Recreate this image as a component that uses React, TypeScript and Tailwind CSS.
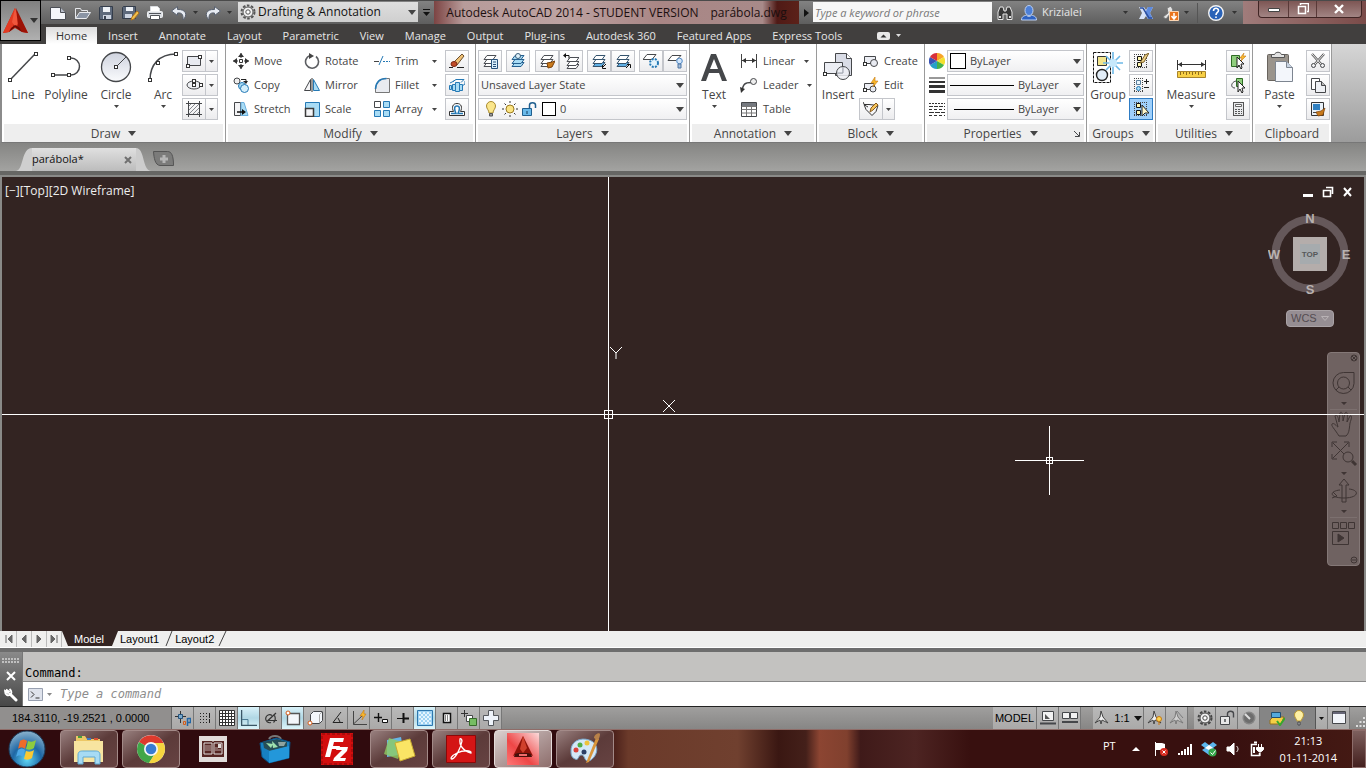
import type { ReactNode } from "react";
import clsx from "clsx";

const DARK = "#45474a";
const BLUE = "#2579b5";
const SKY = "#a9dcf5";

type SvgProps = { w?: number; h?: number; stroke?: string; className?: string; children: ReactNode };

function Svg({ w = 16, h = 16, stroke = DARK, className, children }: SvgProps) {
  return (
    <svg width={w} height={h} viewBox={`0 0 ${w} ${h}`} fill="none" stroke={stroke} className={clsx("shrink-0", className)} aria-hidden="true">
      {children}
    </svg>
  );
}

function Caret({ color = "#444", small = false }: { color?: string; small?: boolean }) {
  return small ? (
    <Svg w={5} h={3} stroke="none"><path d="M0 0h5L2.500 3z" fill={color} /></Svg>
  ) : (
    <Svg w={8} h={5} stroke="none"><path d="M0 0h8L4 5z" fill={color} /></Svg>
  );
}

const node = (x: number, y: number, c = "#333") => <rect x={x - 1.5} y={y - 1.5} width="3" height="3" fill="#fff" stroke={c} />;

/* ---------- quick access ---------- */
const quick = [
  { label: "New", icon: <Svg w={18}><path d="M1.500 2.500h10l5 5v7h-15z" fill="#f4f6fa" stroke="#4b4e55" /><path d="M11.500 2.500v5h5" fill="#b8bdc8" stroke="#4b4e55" /></Svg> },
  { label: "Open", icon: <Svg w={18}><path d="M1.500 13.500v-10h5l1 2h6v2" stroke="#e6e8ec" /><path d="M1.500 13.500l4-6h11l-4 6z" fill="#8b95a5" stroke="#e9ebef" /></Svg> },
  { label: "Save", icon: <Svg><path d="M1.500 1.500h12v13h-13v-12z" fill="#5e6a7c" stroke="#343d4b" /><path d="M4 2h7v5H4z" fill="#edf1f6" stroke="none" /><path d="M4 10h8v4H4z" fill="#cdd5e2" stroke="none" /><path d="M5 11h2v3H5z" fill="#3c4453" stroke="none" /></Svg> },
  { label: "Save As", icon: <Svg w={17}><path d="M1.500 1.500h12v12h-13v-11z" fill="#5e6a7c" stroke="#343d4b" /><path d="M4 2h7v4H4z" fill="#edf1f6" stroke="none" /><path d="M3 9h7v4H3z" fill="#cdd5e2" stroke="none" /><path d="M9 15l1-3 5-6 2 2-5 6z" fill="#f2c04b" stroke="#b1741c" /></Svg> },
  { label: "Plot", icon: <Svg w={18}><path d="M4.500 6V1.500h7l2 2V6" fill="#fff" stroke="#d9dce0" /><rect x="1.500" y="6.500" width="15" height="6" rx="1" fill="#dcdfe4" stroke="#eef0f2" /><path d="M4.500 10.500h9v4h-9z" fill="#fff" stroke="#4f5359" /><path d="M3 8.500h12" stroke="#50555c" /></Svg> },
  { label: "Undo", icon: <Svg><path d="M6.500 1.500L.500 6l6 4.500V8c4-.5 6 1 5.500 7 5-5 3-11-5.500-10.500z" fill="#e7ebf2" stroke="#5a6270" /></Svg>, caret: true },
  { label: "Redo", icon: <Svg><path d="M9.500 1.500l6 4.500-6 4.500V8c-4-.5-6 1-5.500 7-5-5-3-11 5.500-10.500z" fill="#e7ebf2" stroke="#5a6270" /></Svg>, caret: true },
];

function Gear({ fill = "#f2f2f2", stroke = "#555" }: { fill?: string; stroke?: string }) {
  return (
    <Svg stroke={stroke}>
      <circle cx="8" cy="8" r="6.500" strokeDasharray="2.600 1.500" strokeWidth="2" />
      <circle cx="8" cy="8" r="5" fill={fill} />
      <circle cx="8" cy="8" r="2.200" fill="#fff" />
    </Svg>
  );
}

/* ---------- ribbon icons ---------- */
const big = {
  line: <Svg w={32} h={32}><path d="M3 29L28 3" strokeWidth="1.500" />{node(3, 29)}{node(29, 3)}</Svg>,
  polyline: <Svg w={32} h={32}><path d="M3 24h18a8.500 8.500 0 0 0 0-17h-2" strokeWidth="1.500" />{node(3, 24)}{node(19, 24)}{node(19, 7)}</Svg>,
  circle: (
    <Svg w={32} h={32}>
      <defs><linearGradient id="disc" x1="0" y1="0" x2="0" y2="1"><stop offset="0" stopColor="#cfd3de" /><stop offset="1" stopColor="#fafbfd" /></linearGradient></defs>
      <circle cx="16" cy="16" r="14.500" fill="url(#disc)" strokeWidth="1.300" /><path d="M16 16L26 6" />{node(16, 16)}
    </Svg>
  ),
  arc: <Svg w={32} h={32}><path d="M3 29C3 14 12 3 29 3" strokeWidth="1.500" />{node(3, 29)}{node(11, 12)}{node(29, 3)}</Svg>,
  text: <Svg w={28} h={32} stroke="none"><path d="M1 30L11 3h5l11 27h-5l-3-8H9l-3 8zM10 18h8L14 8z" fill="#45474a" fillRule="evenodd" /></Svg>,
  insert: (
    <Svg w={32} h={32}>
      <path d="M13.500 2.500h11l5 5v17h-16z" fill="#d9dce6" /><path d="M24.500 2.500v5h5" fill="#fff" />
      <path d="M2.500 11.500h18v11h-18z" fill="#eceef4" />{node(3, 23)}
      <circle cx="21" cy="22" r="6.500" fill="#eef0f5" fillOpacity=".85" /><path d="M21 22v-6M21 22h-6" stroke="#9aa0ac" />
    </Svg>
  ),
  group: (
    <Svg w={32} h={32}>
      <path d="M1.500 1.500h17v30h-17z" stroke="#111" strokeDasharray="3 1" /><path d="M5.500 5.500h9v9h-9z" fill="#f2e58d" stroke="#333" />
      <circle cx="10" cy="24" r="5.500" fill="#e3eef8" stroke="#222" strokeWidth="1.400" />
      <path d="M21 1v22M11 12h20M14 5l14 14M28 5L14 19" stroke="#6db9e8" strokeWidth="1.600" /><circle cx="21" cy="12" r="4" fill="#c6e8fb" stroke="none" />
    </Svg>
  ),
  measure: (
    <Svg w={32} h={32}>
      <path d="M2.500 9v10M30.500 9v10M3 13.500h27" stroke="#333" /><path d="M7 11l-4 2.500L7 16zM26 11l4 2.500-4 2.500z" fill="#333" stroke="none" />
      <path d="M2.500 20.500h28v6h-28z" fill="#f7cf45" stroke="#a8842a" /><path d="M5.500 21v3M8.500 21v2M11.500 21v3M14.500 21v2M17.500 21v3M20.500 21v2M23.500 21v3M26.500 21v2" stroke="#8d6a1a" />
    </Svg>
  ),
  paste: (
    <Svg w={32} h={32}>
      <rect x="3.500" y="3.500" width="21" height="26" rx="1" fill="#9a948c" stroke="#69645e" /><path d="M7.500 6.500V3.500h3c1-3 6-3 7 0h3v3z" fill="#e2e2e2" stroke="#555" />
      <path d="M11.500 10.500h11l6 6v14h-17z" fill="#f3f6fb" stroke="#7d8590" /><path d="M22.500 10.500v6h6" fill="#c9d4e2" stroke="#7d8590" />
    </Svg>
  ),
};

const sm = {
  rect: <Svg w={18}><path d="M2.500 3.500h13v9h-13z" fill="#e8eaf0" />{node(3, 13)}{node(15, 4)}</Svg>,
  ellipse: <Svg w={18}><ellipse cx="9" cy="8" rx="7" ry="4" fill="#eef0f4" />{node(9, 4)}{node(9, 8)}{node(16, 8)}</Svg>,
  hatch: <Svg w={18}><path d="M3.500 0v16M14.500 0v16M1 2.500h16M1 13.500h16" /><path d="M4 5l2-2M4 9l6-6M4 13L14 3M8 13l6-6M12 13l2-2" stroke="#85888e" /></Svg>,
  move: <Svg><path d="M8 0v5M8 11v5M0 8h5M11 8h5" stroke="#333" /><path d="M8 0l3 4H5zM8 16l3-4H5zM0 8l4-3v6zM16 8l-4-3v6z" fill="#333" stroke="none" /><path d="M6.500 6.500h3v3h-3z" fill="#fff" stroke="#333" /></Svg>,
  copy: <Svg><circle cx="4" cy="4" r="3" fill="#eee" /><path d="M8 2.500h5v2" stroke="#222" /><path d="M10 4h5l-2 3z" fill="#222" stroke="none" /><circle cx="9" cy="9" r="3.500" fill={SKY} stroke={BLUE} /><circle cx="11.500" cy="11.500" r="4" fill="#d5effc" stroke={BLUE} /></Svg>,
  stretch: <Svg><path d="M1.500 1.500h6v13h-6z" fill="#f4f4f6" /><path d="M8 1.500h3l4 13H8z" fill={SKY} stroke="#69aede" /><path d="M4 11h7" stroke="#111" strokeWidth="1.500" /><path d="M9 8l4 3-4 3z" fill="#111" stroke="none" /></Svg>,
  rotate: <Svg><path d="M6 2.500a6.500 6.500 0 1 0 6 1" strokeWidth="1.600" stroke="#5c5e62" /><path d="M5 0l5 3-5 3z" fill="#444" stroke="none" /></Svg>,
  mirror: <Svg><path d="M6.500 2.500v11h-6z" fill="#f5f5f7" /><path d="M9.500 2.500v11h6z" fill={SKY} stroke={BLUE} /><path d="M8 1v14" stroke="#333" /></Svg>,
  scale: <Svg><path d="M1.500 1.500h14v14h-14z" fill={SKY} stroke={BLUE} /><path d="M1.500 7.500h8v8h-8z" fill="#f5f5f7" stroke="#3b3b3b" strokeWidth="1.500" /></Svg>,
  trim: <Svg><path d="M0 8.500h5" stroke="#444" /><path d="M5 12l4-9" stroke={BLUE} /><path d="M9 8.500h7" stroke={BLUE} strokeDasharray="2 1" /></Svg>,
  fillet: <Svg><path d="M1.500 15.500V12C2 5 6 1.500 12.500 1.500h3v14z" fill="#e9ebf0" stroke="#777" /><path d="M1.500 12C2 5 6 1.500 12.500 1.500" stroke={BLUE} strokeWidth="1.600" /></Svg>,
  array: <Svg><path d="M.500.500h6v6h-6z" fill="#fff" /><path d="M9.500.500h6v6h-6zM.500 9.500h6v6h-6zM9.500 9.500h6v6h-6z" fill={SKY} stroke={BLUE} /></Svg>,
  erase: <Svg><path d="M5 9l8-8 2 2-7 9z" fill="#efc176" stroke="#6d5130" /><ellipse cx="5" cy="11" rx="3" ry="2.500" fill="#c14b28" stroke="#7a2a14" /><path d="M0 14.500h4M8 14.500h7" stroke="#222" /></Svg>,
  explode: <Svg><path d="M4 4.500l3-2h8l-3 3M1 6l4-2M13 9l3-2V4" stroke={BLUE} /><path d="M3.500 7.500h3v-2h4v2h3v6h-3v1h-4v-1h-3z" fill={SKY} stroke={BLUE} /><path d="M6.500 7.500v6M10.500 7.500v6M.500 8.500h2v4h-2z" stroke={BLUE} fill={SKY} /></Svg>,
  offset: <Svg><path d="M.500 14.500h15v-4h-4c2-4 1-8-3.500-8s-5.500 4-3.500 8h-4z" stroke="#333" fill="#fff" /><path d="M2 12.500h5C5 8 5 5 8 5s3 3 1 7.500h5" stroke={BLUE} strokeWidth="1.500" /></Svg>,
  linear: <Svg w={18}><path d="M1.500 1v14M16.500 1v14M2 7.500h14" stroke="#444" /><path d="M6 5L2 7.500 6 10zM12 5l4 2.500-4 2.500z" fill="#333" stroke="none" /></Svg>,
  leader: <Svg w={18}><path d="M2 14C3 7 5 5.500 11 5.500" strokeWidth="1.400" /><path d="M0 10l1 6 4-4z" fill="#333" stroke="none" /><circle cx="13.500" cy="4.500" r="3" fill="#eee" /></Svg>,
  table: <Svg w={18}><path d="M1.500 1.500h15v14h-15z" fill="#fff" /><path d="M2 2h14v3H2z" fill="#75797f" stroke="none" /><path d="M1.500 5.500h15M1.500 8.500h15M1.500 12h15M6.500 5v10M11.500 5v10" stroke="#777" /></Svg>,
  create: <Svg><path d="M1.500 3.500h11v7h-11z" fill="#eceef4" />{node(2, 11)}<circle cx="11" cy="10" r="3.500" fill="#e9ebf2" /></Svg>,
  edit: <Svg><path d="M1.500 6.500h10v6h-10z" fill="#eceef4" />{node(2, 13)}<circle cx="10" cy="12" r="3" fill="#e9ebf2" /><path d="M12 0L8 6h3l-1 4 5-6h-3z" fill="#f8b72d" stroke="#c67b13" strokeWidth=".6" /></Svg>,
  attrs: <Svg><path d="M1 3.500h5l9 1-2 6-4 4-6-6z" fill="#f6f6f8" stroke="#333" /><path d="M0 1c1 3 3 4 5 5" stroke="#333" /><path d="M7 11l1-4 5-5 2 2-5 5z" fill="#f6c55c" stroke="#8a5b1a" /></Svg>,
};

const sheets = (c = "#4b4e54", f = "#fff", last = f) => (
  <g stroke={c}><path d="M5 9.500h9l-3 4H2z" fill={last} /><path d="M5 6.500h9l-3 4H2z" fill={f} /><path d="M5 2.500h9l-3 4H2z" fill={f} /></g>
);

const layerTools = [
  [{ label: "Layer Properties", icon: <Svg>{sheets()}<path d="M9.500 6.500h6v9h-6z" fill="#d9eefb" stroke="#27507a" /><path d="M11 9h3M11 11.500h3M11 13.500h3" stroke="#27507a" /></Svg> }],
  [{ label: "Make Current", icon: <Svg>{sheets("#255f8f", SKY)}<circle cx="8" cy="3" r="2.500" fill="#dff2fc" stroke="#375b78" /></Svg> }],
  [
    { label: "Match Layer", icon: <Svg>{sheets()}<path d="M8 10l5-1 3-1-3 6-4 1z" fill="#c97a1b" stroke="#7c420b" /></Svg> },
    { label: "Previous Layer", icon: <Svg><g transform="translate(2 2)">{sheets()}</g><path d="M1 2.500h5v3" stroke="#111" /><path d="M0 2.500L3 0v5z" fill="#111" stroke="none" /></Svg> },
  ],
  [
    { label: "Isolate", icon: <Svg>{sheets("#35536d", "#fff", "#5fb0e6")}<path d="M15 11l-4 4M11.500 12v3.500H15" stroke="#111" /></Svg> },
    { label: "Unisolate", icon: <Svg>{sheets("#35536d", "#fff", "#5fb0e6")}<path d="M11 15l4-4M12 11.500h3.500V15" stroke="#111" /></Svg> },
  ],
  [
    { label: "Freeze", icon: <Svg><path d="M4 1.500h9l-4 5H0z" fill="#fff" /><circle cx="11" cy="10" r="4" fill="#e4f4fd" stroke={BLUE} strokeDasharray="2 1.200" strokeWidth="2" /></Svg> },
    { label: "Off", icon: <Svg><path d="M5 2.500h9l-5 5H1z" fill="#fff" /><circle cx="12.500" cy="8" r="2.800" fill="#d1e5fa" stroke="#4f88c6" /><path d="M11 11h3v4h-3z" fill="#a8bfd8" stroke="#4f77a6" /></Svg> },
  ],
];

const dotGrid = <path d="M1.500 1v14M13.500 1v14M1 1.500h13M1 14.500h13" stroke="#444" strokeDasharray="1 1" />;

const groupTools = [
  { label: "Ungroup", icon: <Svg>{dotGrid}<path d="M4.500 3.500h4v4h-4zM4.500 9.500h4v4h-4z" fill="#fff7b0" stroke="#111" /><path d="M7 10l5-8 4-2-5 9z" fill="#ecd08b" stroke="#7c6025" /></Svg> },
  { label: "Group Edit", icon: <Svg><path d="M1.500 1v14M9.500 1v14M1 1.500h9M1 14.500h9" stroke="#444" strokeDasharray="1 1" /><path d="M3.500 3.500h4v4h-4z" fill="#eaf6fd" stroke="#5a7f9c" /><circle cx="5.500" cy="11.500" r="2" fill={SKY} stroke={BLUE} /><path d="M11 4.500h5M13.500 2v5M11 10.500h5" stroke="#222" /></Svg> },
  { label: "Group Selection", icon: <Svg>{dotGrid}<path d="M3.500 2.500h4v4h-4zM3.500 9.500h4v4h-4z" fill="#fff7b0" stroke="#111" /><path d="M9 4v11l3-3h4z" fill="#fff7c8" stroke="#222" /></Svg>, active: true },
];

const utilityTools = [
  { label: "Quick Select", icon: <Svg><path d="M1.500 2.500h8v11h-8z" fill="#8fce7d" stroke="#2e6b25" /><path d="M14 0l-4 5h2l-1 3 5-5h-3z" fill="#f8b72d" stroke="#c67b13" strokeWidth=".6" /><path d="M7 4v11l2-3 2 4 1-1-1-4h3z" fill="#fff" stroke="#222" /></Svg> },
  { label: "Select All", icon: <Svg><path d="M6.500 1.500h6v8h-6z" fill="#8fce7d" stroke="#2e6b25" /><path d="M6 4C1 5 0 11 5 11" /><path d="M8 4v11l2-3 2 4 1-1-1-4h3z" fill="#fff" stroke="#222" /></Svg> },
  { label: "Quick Calculator", icon: <Svg><rect x="3.500" y="1.500" width="10" height="13" fill="#e9eaec" stroke="#555" /><path d="M5.500 3.500h6v2h-6z" fill="#fff" stroke="#666" /><path d="M5 8.500h7M5 10.500h7M5 12.500h7" stroke="#555" strokeDasharray="2 1" /></Svg> },
];

const clipTools = [
  { label: "Cut", icon: <Svg><path d="M2 1l9 10M14 1L5 11" stroke="#555" strokeWidth="2.400" /><path d="M2 1l9 10M14 1L5 11" stroke="#eee" /><circle cx="3.500" cy="12.500" r="2" /><circle cx="12.500" cy="12.500" r="2" /></Svg> },
  { label: "Copy Clip", icon: <Svg><path d="M1.500 1.500h8v11h-8z" fill="#fff" /><path d="M5.500 4.500h6l4 4v7h-10z" fill="#eef0f4" /><path d="M11.500 4.500v4h4" fill="#bbb" /></Svg> },
  { label: "Match Properties", icon: <Svg><path d="M1.500 1.500h12v13h-12z" fill="#e9f1f8" stroke="#333" /><path d="M3 3h7v6H3z" fill="#2f7fc0" stroke="none" /><path d="M3 11.500h5" /><path d="M6 11l5-1 4-3-2 7-5 1z" fill="#c97a1b" stroke="#7c420b" strokeWidth=".7" /></Svg> },
];

const tabs = ["Home", "Insert", "Annotate", "Layout", "Parametric", "View", "Manage", "Output", "Plug-ins", "Autodesk 360", "Featured Apps", "Express Tools"];

/* ---------- ribbon parts ---------- */
const boxed = "flex items-center justify-center border border-[#c4c6cb] bg-linear-to-b from-white to-[#ececee]";

function Panel({ title, width, caret = true, launcher = false, children }: { title: string; width: string; caret?: boolean; launcher?: boolean; children: ReactNode }) {
  return (
    <section className={clsx("flex shrink-0 flex-col border-r border-[#9a9a9a] bg-white", width)}>
      <div className="flex h-20 items-start pt-1.5">{children}</div>
      <h2 className="mx-0.5 flex h-[18px] items-center bg-[#eeeeee] pt-px text-[12px]">
        <button className="flex flex-1 items-center justify-center gap-2 leading-4">{title}{caret && <Caret />}</button>
        {launcher && <button aria-label={`${title} settings`} className="pr-1"><Svg w={6} h={6}><path d="M0 0l5 5M5.500 1v4.500H1" /></Svg></button>}
      </h2>
    </section>
  );
}

function BigButton({ label, icon, width, caret = false }: { label: string; icon: ReactNode; width: string; caret?: boolean }) {
  return (
    <button className={clsx("flex shrink-0 flex-col items-center pt-px text-[12px]", width)}>
      {icon}
      <span className="mt-1 leading-4">{label}</span>
      {caret && <span className="mt-0.5"><Caret small /></span>}
    </button>
  );
}

function ToolButton({ label, icon, caret = false }: { label: string; icon: ReactNode; caret?: boolean }) {
  return (
    <button className="flex h-[22px] items-center gap-[5px] whitespace-nowrap">
      {icon}<span>{label}</span>{caret && <span className="ml-1"><Caret small /></span>}
    </button>
  );
}

/* same as ToolButton, with the arrow held at the column's edge */
function MenuTool({ label, icon }: { label: string; icon: ReactNode }) {
  return (
    <button className="flex h-[22px] items-center gap-[5px] whitespace-nowrap pr-2">
      {icon}<span className="flex-1 text-left">{label}</span><Caret small />
    </button>
  );
}

function IconButton({ label, icon, active = false }: { label: string; icon: ReactNode; active?: boolean }) {
  return (
    <button aria-label={label} className={clsx("h-[22px] w-6 shrink-0", active ? "flex items-center justify-center border border-[#2e7cc4] bg-[#9fd0fb]" : boxed)}>
      {icon}
    </button>
  );
}

function SplitButton({ label, icon }: { label: string; icon: ReactNode }) {
  return (
    <div className="flex">
      <button aria-label={label} className={clsx("h-[22px] w-6", boxed)}>{icon}</button>
      <button aria-label={`${label} options`} className={clsx("h-[22px] w-3 border-l-0", boxed)}><Caret small /></button>
    </div>
  );
}

function Combo({ label, value, before }: { label: string; value: string; before?: ReactNode }) {
  return (
    <label className="flex h-[22px] min-w-0 flex-1 items-center gap-1 border border-[#c4c6cb] bg-linear-to-b from-white to-[#f0f0f2] px-0.5">
      {before}
      <select aria-label={label} className="min-w-0 flex-1 appearance-none bg-transparent leading-4 outline-none">
        <option>{value}</option>
      </select>
      <Caret />
    </label>
  );
}

const Rows = ({ width, children }: { width: string; children: ReactNode }) => <div className={clsx("flex shrink-0 flex-col gap-0.5", width)}>{children}</div>;

function Ribbon() {
  return (
    <div className="flex h-[99px] border-l-2 border-[#8b8b8b] border-b border-b-[#777] bg-linear-to-b from-[#d6d6d6] to-[#9c9c9c] text-[11px] text-[#454545]">
      <Panel title="Draw" width="w-56">
        <BigButton label="Line" icon={big.line} width="w-[42px]" />
        <BigButton label="Polyline" icon={big.polyline} width="w-11" />
        <BigButton label="Circle" icon={big.circle} width="w-14" caret />
        <BigButton label="Arc" icon={big.arc} width="w-[38px]" caret />
        <Rows width="w-9">
          <SplitButton label="Rectangle" icon={sm.rect} />
          <SplitButton label="Ellipse" icon={sm.ellipse} />
          <SplitButton label="Hatch" icon={sm.hatch} />
        </Rows>
      </Panel>
      <Panel title="Modify" width="w-[250px]">
        <div className="flex pl-[7px]">
          <Rows width="w-[71px]">
            <ToolButton label="Move" icon={sm.move} />
            <ToolButton label="Copy" icon={sm.copy} />
            <ToolButton label="Stretch" icon={sm.stretch} />
          </Rows>
          <Rows width="w-[70px]">
            <ToolButton label="Rotate" icon={sm.rotate} />
            <ToolButton label="Mirror" icon={sm.mirror} />
            <ToolButton label="Scale" icon={sm.scale} />
          </Rows>
          <Rows width="w-[71px]">
            <MenuTool label="Trim" icon={sm.trim} />
            <MenuTool label="Fillet" icon={sm.fillet} />
            <MenuTool label="Array" icon={sm.array} />
          </Rows>
          <Rows width="w-6">
            <IconButton label="Erase" icon={sm.erase} />
            <IconButton label="Explode" icon={sm.explode} />
            <IconButton label="Offset" icon={sm.offset} />
          </Rows>
        </div>
      </Panel>
      <Panel title="Layers" width="w-[214px]">
        <div className="flex flex-1 flex-col gap-0.5 px-0.5">
          <div className="flex justify-between">
            {layerTools.map((set) => (
              <div key={set[0].label} className="flex">
                {set.map((tool) => <IconButton key={tool.label} {...tool} />)}
              </div>
            ))}
          </div>
          <div className="flex"><Combo label="Layer state" value="Unsaved Layer State" /></div>
          <div className="flex">
            <Combo
              label="Layer"
              value="0"
              before={
                <span className="flex items-center gap-[3px] pl-0.5">
                  <Svg><path d="M6 12C6 9 3.500 8 3.500 5a4.500 4.500 0 0 1 9 0c0 3-2.500 4-2.500 7z" fill="#fbe68b" stroke="#a98a2f" /><path d="M6.500 12.500h3v2.500h-3z" fill="#999" stroke="#555" /></Svg>
                  <Svg><circle cx="8" cy="8" r="4" fill="#fbe483" stroke="#9b7b22" /><path d="M8 0v2M8 14v2M0 8h2M14 8h2M2.500 2.500l1.500 1.500M12 12l1.500 1.500M13.500 2.500L12 4M4 12l-1.500 1.500" stroke="#333" /></Svg>
                  <Svg><path d="M1.500 7.500h9v7h-9z" fill="#69b9ea" stroke="#1e5e8e" /><path d="M8.500 7V4c0-3 6-3 6 0v3" stroke="#1e5e8e" strokeWidth="1.500" /><path d="M6 10v3" stroke="#173f60" /></Svg>
                  <span className="ml-0.5 size-3.5 border border-black bg-white" />
                </span>
              }
            />
          </div>
        </div>
      </Panel>
      <Panel title="Annotation" width="w-[127px]">
        <BigButton label="Text" icon={big.text} width="w-12" caret />
        <Rows width="w-20">
          <div className="pl-0.5"><ToolButton label="Linear" icon={sm.linear} caret /></div>
          <div className="pl-0.5"><ToolButton label="Leader" icon={sm.leader} caret /></div>
          <div className="pl-0.5"><ToolButton label="Table" icon={sm.table} /></div>
        </Rows>
      </Panel>
      <Panel title="Block" width="w-[108px]">
        <BigButton label="Insert" icon={big.insert} width="w-[42px]" />
        <Rows width="w-16">
          <div className="pl-1"><ToolButton label="Create" icon={sm.create} /></div>
          <div className="pl-1"><ToolButton label="Edit" icon={sm.edit} /></div>
          <SplitButton label="Edit Attributes" icon={sm.attrs} />
        </Rows>
      </Panel>
      <Panel title="Properties" width="w-[162px]" launcher>
        <div className="flex flex-1 flex-col gap-0.5 pl-1 pr-0.5">
          <div className="flex items-center gap-0.5">
            <Svg stroke="none">
              <path d="M8 8V0a8 8 0 0 1 7 4z" fill="#f7a528" /><path d="M8 8l7-4a8 8 0 0 1 0 8z" fill="#f4e02f" /><path d="M8 8l7 4a8 8 0 0 1-7 4z" fill="#46b149" />
              <path d="M8 8v8a8 8 0 0 1-7-4z" fill="#27a0c9" /><path d="M8 8l-7 4a8 8 0 0 1 0-8z" fill="#3a54b5" /><path d="M8 8L1 4a8 8 0 0 1 7-4z" fill="#d8303b" />
            </Svg>
            <Combo label="Object color" value="ByLayer" before={<span className="size-4 shrink-0 border border-black bg-white" />} />
          </div>
          <div className="flex items-center gap-0.5">
            <Svg stroke="#333"><path d="M0 1h16" /><path d="M0 5h16" strokeWidth="2" /><path d="M0 9.500h16M0 14.500h16" strokeWidth="3" /></Svg>
            <Combo label="Lineweight" value="ByLayer" before={<span className="w-16 border-t border-black" />} />
          </div>
          <div className="flex items-center gap-0.5">
            <Svg stroke="#333"><path d="M0 2.500h16" strokeDasharray="2 1" /><path d="M0 5.500h16" strokeDasharray="4 1" /><path d="M0 8.500h16M0 14.500h16" strokeDasharray="3 2" /><path d="M0 11.500h16" strokeDasharray="5 1" /></Svg>
            <Combo label="Linetype" value="ByLayer" before={<span className="ml-1 w-15 border-t border-black" />} />
          </div>
        </div>
      </Panel>
      <Panel title="Groups" width="w-[69px]">
        <BigButton label="Group" icon={big.group} width="w-[42px]" />
        <Rows width="w-6">{groupTools.map((t) => <IconButton key={t.label} {...t} />)}</Rows>
      </Panel>
      <Panel title="Utilities" width="w-[97px]">
        <BigButton label="Measure" icon={big.measure} width="w-[70px]" caret />
        <Rows width="w-6">{utilityTools.map((t) => <IconButton key={t.label} {...t} />)}</Rows>
      </Panel>
      <Panel title="Clipboard" width="w-[79px]" caret={false}>
        <BigButton label="Paste" icon={big.paste} width="w-[53px]" caret />
        <Rows width="w-6">{clipTools.map((t) => <IconButton key={t.label} {...t} />)}</Rows>
      </Panel>
    </div>
  );
}

function Header() {
  return (
    <header className="flex h-11 bg-[#413f3e]">
      <button aria-label="Application menu" className="flex h-[41px] w-[41px] shrink-0 items-center justify-center gap-0.5 border border-black bg-linear-to-b from-[#808080] to-[#b0b0b0]">
        <Svg w={25} h={26} stroke="none">
          <path d="M12 0L0 25l6-1 6-4 7 4 6 1z" fill="#c41f0f" /><path d="M12 0L0 25l6-1 4-5z" fill="#e33a22" /><path d="M12 0L9 14l3 5 5-5z" fill="#f0563c" /><path d="M13 0l12 25-6-1-4-6z" fill="#9c1206" /><path d="M6 24l6-5 7 5-3-5-4-2-4 3z" fill="#6e0b04" />
        </Svg>
        <Caret color="#333" />
      </button>
      <div className="flex min-w-0 flex-1 flex-col">
        <div className="flex h-6 items-stretch border-t border-[#4a4a4a] bg-linear-to-b from-[#828282] to-[#5e5e5e]">
          <div className="flex items-center gap-[7px] pl-2 pr-1.5">
            {quick.map((item) => (
              <button key={item.label} aria-label={item.label} className="flex items-center gap-1.5">
                {item.icon}{item.caret && <Caret color="#333" small />}
              </button>
            ))}
          </div>
          <label className="mb-0.5 mt-px flex w-[180px] items-center gap-0.5 bg-linear-to-b from-[#dedede] to-[#cfcfcf] px-0.5 text-[#111]">
            <Gear />
            <select aria-label="Workspace" className="min-w-0 flex-1 appearance-none bg-transparent text-[12px] leading-4 outline-none"><option>Drafting &amp; Annotation</option></select>
            <Caret />
          </label>
          <button aria-label="Customize" className="flex w-4 items-center justify-center"><Svg w={7} h={8} stroke="none"><path d="M0 0h7v1H0zM0 3h7L3.500 7z" fill="#111" /></Svg></button>
          <h1 className="flex flex-1 items-center justify-center gap-3 whitespace-pre bg-[linear-gradient(90deg,#7c4443_0%,#b79b9a_8%,#bda3a2_35%,#a98685_62%,#a88a89_90%,#4f1a16_94%,#5c2119_100%)] text-[12px] text-[#1c0f0f]">
            <span>Autodesk AutoCAD 2014 - STUDENT VERSION</span><span>parábola.dwg</span>
          </h1>
          <button aria-label="Collapse search" className="flex w-3.5 items-center justify-center"><Svg w={5} h={8} stroke="none"><path d="M0 0l5 4-5 4z" fill="#111" /></Svg></button>
          <input aria-label="Search" placeholder="Type a keyword or phrase" className="mb-0.5 mt-px w-[179px] bg-[#f7f7f7] px-0.5 pt-0.5 text-[11px] italic outline-none placeholder:text-[#777]" />
          <div className="flex w-[251px] items-center text-[11px] text-[#e6e6e6]">
            <button aria-label="Find" className="ml-1"><Svg w={18}><path d="M2 14.500V7l2-5h3l1 4h2l1-4h3l2 5v7.500h-5V9H7v5.500z" fill="#3a3a3a" stroke="#e5e5e5" /><path d="M4 11v2M14 11v2" stroke="#ddd" strokeWidth="2" /></Svg></button>
            <button className="ml-[7px] flex flex-1 items-center gap-[5px]">
              <Svg><ellipse cx="8" cy="5.500" rx="4" ry="5" fill="#4d80d8" stroke="#bcd0f2" /><path d="M.5 15c0-4 3-4 5-5 1 2 4 2 5 0 2 1 5 1 5 5z" fill="#2e62c2" stroke="#bcd0f2" /></Svg>
              <span className="flex-1 text-left">Krizialei</span><Caret color="#333" small />
            </button>
            <button aria-label="Exchange" className="ml-2.5"><Svg stroke="none"><path d="M1 2h5l2 3 2-3h5l-3 6 3 6h-5l-2-3-2 3H1l3-6z" fill="#d6e2f8" /><path d="M15 2h-5L7 8l3 6h5l-3-6z" fill="#5e8be0" /><path d="M2 3h3l6 10h3" stroke="#2c4f9f" strokeWidth="1.500" /></Svg></button>
            <button aria-label="Stay connected" className="ml-2 flex items-center gap-[5px]"><Svg w={17}><path d="M1 12l5-4-1-5 4-2 2 4-2 3-5 6z" fill="#e3e3e3" stroke="#777" /><path d="M7.500 6.500h9v9h-9z" fill="#e9741c" stroke="#fbd5b2" /><path d="M12 8v5M9.500 11l2.500 3 2.500-3" stroke="#fff" strokeWidth="1.500" /></Svg><Caret color="#333" small /></button>
            <span className="ml-2 h-5 border-l border-[#555]" />
            <button aria-label="Help" className="ml-2.5 mr-1.5 flex items-center gap-2">
              <Svg><circle cx="8" cy="8" r="7.300" fill="#2a63b8" stroke="#f3f3f3" strokeWidth="1.400" /><path d="M5.500 6c0-3.500 5-3.500 5-.5C10.500 7.500 8 7.500 8 10M8 11.500v1.500" stroke="#fff" strokeWidth="1.600" /></Svg><Caret color="#333" small />
            </button>
          </div>
          <div className="flex w-[123px] justify-end bg-linear-to-r from-[#a07c7b] to-[#7a4b49] pr-1">
            <div className="flex h-[17px] w-[104px] overflow-hidden rounded-b border border-t-0 border-[#402524] bg-linear-to-b from-[#7d5654] to-[#a28584]">
              <button aria-label="Minimize" className="flex w-[30px] items-center justify-center border-r border-[#593938]"><Svg w={12} h={10} stroke="#444"><path d="M.5 4.500h11v3H.5z" fill="#fff" /></Svg></button>
              <button aria-label="Restore" className="flex w-7 items-center justify-center border-r border-[#593938]"><Svg w={12} h={12} stroke="#fff"><path d="M3.500 2V.500h8v8H10M1.500 3.500h7v7h-7z" strokeWidth="1.500" /></Svg></button>
              <button aria-label="Close" className="flex flex-1 items-center justify-center"><Svg w={12} h={10} stroke="#fff"><path d="M2 1l8 8M10 1L2 9" strokeWidth="2.400" /></Svg></button>
            </div>
          </div>
        </div>
        <nav className="flex h-5 items-end gap-px pl-[5px] text-[11px] text-[#e6e6e6]">
          {tabs.map((tab, i) => (
            <button key={tab} className={clsx("h-[17px] px-2.5 leading-4", i === 0 && "bg-linear-to-b from-[#dcdcdc] to-white text-[#333]")}>{tab}</button>
          ))}
          <button aria-label="Minimize ribbon" className="ml-6 flex h-[17px] items-center gap-1.5">
            <Svg w={13} h={8} stroke="none"><rect width="13" height="8" rx="2" fill="#e8e8e8" /><path d="M3.500 5.500h6l-3-3z" fill="#333" /></Svg><Caret color="#ddd" small />
          </button>
        </nav>
      </div>
    </header>
  );
}

function FileTabs() {
  return (
    <div className="flex h-[28px] items-end bg-linear-to-b from-[#858583] to-[#a3a3a1] pl-4 text-[11px]">
      <Svg w={16} h={23} stroke="none"><path d="M0 23C8 22 5 0 16 0v23z" fill="#cfcfcf" /></Svg>
      <div className="flex h-[23px] w-[104px] items-center justify-between bg-linear-to-b from-[#e0e0e0] to-[#bcbcbc] text-[#111]">
        <button>parábola*</button>
        <button aria-label="Close drawing" className="pr-1"><Svg w={8} h={8} stroke="#707070"><path d="M1 1l6 6M7 1L1 7" strokeWidth="2" /></Svg></button>
      </div>
      <Svg w={16} h={23} stroke="none"><path d="M0 0c9 0 6 22 15 23H0z" fill="#cdcdcd" /></Svg>
      <button aria-label="New drawing" className="mb-1"><Svg w={24} h={17} stroke="#555"><path d="M1.500 1.500h14c4 0 6 4 6 14H8C3 15 2 8 1.500 1.500z" fill="#7b7b7a" /><path d="M12 5v8M8 9h8" stroke="#b5b5b5" strokeWidth="3" /></Svg></button>
    </div>
  );
}

function ViewCube() {
  return (
    <div className="absolute right-3 top-[35px] flex w-[84px] flex-col items-center">
      <Svg w={84} h={84} stroke="none">
        <circle cx="42" cy="42" r="34.500" stroke="#65585a" strokeWidth="8" />
        <rect x="25" y="25" width="34" height="34" fill="#b4adab" /><rect x="32" y="32" width="20" height="20" fill="#a6abae" />
        <g fontFamily="Liberation Sans, sans-serif" fontWeight="bold" textAnchor="middle" fill="#b9b2b0" fontSize="13">
          <text x="42" y="11">N</text><text x="42" y="82">S</text><text x="6" y="47">W</text><text x="78" y="47">E</text>
          <text x="42" y="45" fontSize="8" fill="#55585a">TOP</text>
        </g>
      </Svg>
      <button className="mt-3.5 flex h-[17px] w-12 items-center justify-between rounded border border-[#aaa3a6] bg-[#968e93] px-1 font-['Liberation_Sans',sans-serif] text-[11px] text-[#544c51]">
        WCS<Svg w={8} h={5} stroke="#b9b2b5"><path d="M.5.500h7L4 4.500z" /></Svg>
      </button>
    </div>
  );
}

function NavBar() {
  return (
    <div className="absolute right-1 top-[175px] h-[214px] w-[33px] rounded border border-[#847877] bg-[#6f6261]">
      <Svg w={31} h={212} stroke="#3f3534">
        <circle cx="26" cy="5" r="3" /><path d="M24 3l4 4M28 3l-4 4" />
        <path d="M15.500 19.500h10.500v11a10.500 10.500 0 1 1-10.500-11z" /><circle cx="15.500" cy="30" r="6" /><path d="M11 34l-3 3M20 34l3 3" />
        <path d="M2 56.500h27M2 164.500h27" stroke="#7c706f" />
        <path d="M13 49h6l-3 3zM13 119h6l-3 3zM13 157h6l-3 3z" fill="#3f3534" stroke="none" />
        <path d="M11 83c-5-8-8-10-7-12 2-2 5 3 6 3L7 63c1-2 3-1 4 6l1-9c1-2 3-1 3 8l2-8c2-2 3 0 2 9l3-6c2-1 2 1 0 7-1 8-1 10-4 13z" />
        <path d="M5 90l15 15M20 90L5 105M4 94v-5h5M16 89h5v5M4 101v5h5" /><circle cx="20" cy="104" r="5" fill="#6f6261" /><path d="M24 108l4 4" strokeWidth="3" />
        <path d="M14 149v-17h-3l5-6 5 6h-3v17z" /><path d="M12 137c-11 1-11 8 4 8s16-8 5-9M5 139l4 4-5 2" />
        <path d="M4.500 169.500h6v6h-6zM12.500 169.500h6v6h-6zM20.500 169.500h6v6h-6zM4.500 178.500h16v13h-16z" /><path d="M10 181l6 4-6 4z" fill="#3f3534" />
        <circle cx="26" cy="207" r="3" /><path d="M24 207h4" />
      </Svg>
    </div>
  );
}

function Canvas() {
  return (
    <main className="relative min-h-[455px] flex-1 overflow-hidden border-x-2 border-t-2 border-[#8a8a88] bg-[#332422]">
      <button className="absolute left-[3px] top-1.5 text-[12px] leading-4 text-[#eee]">[−][Top][2D Wireframe]</button>
      <div className="absolute right-2.5 top-[9px] flex gap-2">
        <button aria-label="Minimize drawing"><Svg w={12} h={12} stroke="none"><path d="M1 8h10v3H1z" fill="#fff" /></Svg></button>
        <button aria-label="Restore drawing"><Svg w={12} h={12} stroke="#fff"><path d="M4 1.500h6.500V8M1.500 4.500h7v6h-7z" strokeWidth="1.600" /></Svg></button>
        <button aria-label="Close drawing window"><Svg w={12} h={12} stroke="#fff"><path d="M2 2l7 8M9 2l-7 8" strokeWidth="2" /></Svg></button>
      </div>
      <ViewCube />
      <NavBar />
      <div className="absolute inset-y-0 left-[606px] w-px bg-white" />
      <div className="absolute inset-x-0 top-[237px] h-px bg-white" />
      <div className="absolute left-[602px] top-[233px] size-[9px] border border-white" />
      <Svg w={14} h={14} stroke="#fff" className="absolute left-[607px] top-[169px]"><path d="M1 1l6 6 6-6M7 7v6" /></Svg>
      <Svg w={14} h={14} stroke="#fff" className="absolute left-[660px] top-[222px]"><path d="M1 1l12 12M13 1L1 13" /></Svg>
      <Svg w={69} h={69} stroke="#fff" className="absolute left-[1013px] top-[249px]"><path d="M34.500 0v69M0 34.500h69M31.500 31.500h6v6h-6z" shapeRendering="crispEdges" /></Svg>
    </main>
  );
}

function LayoutTabs() {
  const nav = [
    { label: "First layout", d: "M3 2v8M9 2L5 6l4 4z" }, { label: "Previous layout", d: "M8 2L4 6l4 4z" },
    { label: "Next layout", d: "M4 2l4 4-4 4z" }, { label: "Last layout", d: "M3 2l4 4-4 4zM9 2v8" },
  ];
  return (
    <div className="flex h-[17px] border-b border-white bg-[#efefee] pl-0.5 font-['Liberation_Sans',sans-serif] text-[11px] text-black">
      {nav.map((item) => (
        <button key={item.label} aria-label={item.label} className="flex w-[15px] items-center justify-center border-r border-[#bbb]"><Svg w={12} h={12} stroke="#666"><path d={item.d} fill="#666" /></Svg></button>
      ))}
      <Svg w={8} h={16} stroke="none"><path d="M0 0h8v15H6z" fill="#332422" /></Svg>
      <button className="h-[15px] bg-[#332422] px-1 leading-4 text-white">Model</button>
      <Svg w={12} h={16} stroke="none"><path d="M0 0h10L4 15H0z" fill="#332422" /></Svg>
      <button className="leading-4">Layout1</button>
      <Svg w={16} h={16} stroke="#444"><path d="M13 0L7 15" /></Svg>
      <button className="leading-4">Layout2</button>
      <Svg w={16} h={16} stroke="#444"><path d="M12 0L5 15" /></Svg>
    </div>
  );
}

function CommandLine() {
  return (
    <div className="flex h-[58px] border-t-4 border-[#6d6d6d] bg-[#c3c2c0] font-['DejaVu_Sans_Mono',monospace] text-[12px]">
      <div className="flex w-[23px] flex-col items-center justify-between border-r border-[#777] bg-linear-to-b from-[#8a8a8a] to-[#474747] pb-1 pt-1.5">
        <Svg w={18} h={5} stroke="#c0c0c0"><path d="M0 1h18M0 4h18" strokeWidth="2" strokeDasharray="2 1" /></Svg>
        <button aria-label="Close command line"><Svg w={10} h={10} stroke="#fff"><path d="M1 1l8 8M9 1L1 9" strokeWidth="2" /></Svg></button>
        <button aria-label="Customize command line"><Svg w={14} h={14} stroke="#fff"><path d="M6 6l6 6" strokeWidth="3" strokeLinecap="round" /><path d="M2 1.500l3 2-1 1.500-3-2c0 4 3 5 5 4s2-4-.5-6" strokeWidth="1.800" /></Svg></button>
      </div>
      <div className="flex min-w-0 flex-1 flex-col">
        <p className="flex h-[30px] items-end border-b border-[#888] px-0.5 leading-4 text-black">Command:</p>
        <div className="flex flex-1 items-center gap-1 bg-white pl-[5px]">
          <button aria-label="Recent commands" className="flex items-center gap-1">
            <Svg w={15} h={13}><path d="M.5.500h14v12H.5z" fill="#dfe3ec" stroke="#98a0b0" /><path d="M3 3.500l3 3-3 3M7.500 10h4" stroke="#333" /></Svg><Caret color="#888" small />
          </button>
          <input aria-label="Command" placeholder="Type a command" className="flex-1 bg-transparent pl-1 italic outline-none placeholder:text-[#8d8d8d]" />
        </div>
      </div>
    </div>
  );
}

const modes = [
  { label: "Infer", on: false, icon: <Svg><path d="M0 6.500h11M5.500 1v12" stroke="#333" /><path d="M3.500 4.500h4v4h-4z" fill="#7ba9cc" stroke="#25537c" /><path d="M12.500 8v8M12.500 8.500h3v4h-3" stroke="#2366a5" strokeWidth="1.500" /><path d="M8.500 11.500h2v3h-2z" stroke="#d45c1a" /></Svg> },
  { label: "Snap", on: false, icon: <Svg stroke="#222"><path d="M3 3.500h10M3 6.500h10M3 9.500h10M3 12.500h10" strokeDasharray="1 2" /><path d="M12.500 3v10" strokeDasharray="5 1" /></Svg> },
  { label: "Grid", on: false, icon: <Svg stroke="#333"><path d="M.5.500h15v15H.5z" fill="#fff" /><path d="M3.500 0v16M6.500 0v16M9.500 0v16M12.500 0v16M0 3.500h16M0 6.500h16M0 9.500h16M0 12.500h16" /></Svg> },
  { label: "Ortho", on: true, icon: <Svg><path d="M.5 0v15.500H16" stroke="#3a5666" strokeWidth="1.500" /><path d="M1 9.500h6V15" stroke="#4c7c94" /></Svg> },
  { label: "Polar", on: false, icon: <Svg stroke="#333"><path d="M13 3L5 10.500h9M8 12.500a4 4 0 1 1 1-7M11.500 5.500c1 2 1 5-1 7" strokeWidth="1.200" /></Svg> },
  { label: "Osnap", on: true, icon: <Svg><path d="M2.500 3.500h12v11h-12z" fill="#f3f6fa" stroke="#555" strokeWidth="1.300" /><circle cx="3" cy="3" r="2" fill="#fff" stroke="#d45c1a" /></Svg> },
  { label: "3D Osnap", on: false, icon: <Svg><path d="M3.500 4.500l3-3h9v9l-3 3h-9z" fill="#f3f6fa" /><path d="M12.500 13V4.500l3-3" stroke="#aaa" /><circle cx="3" cy="13" r="2" fill="#fff" stroke="#d45c1a" /></Svg> },
  { label: "Otrack", on: false, icon: <Svg stroke="#222"><path d="M12 2L4 12.500h10M9 8l2 4" /></Svg> },
  { label: "Dynamic UCS", on: false, icon: <Svg><path d="M2.500 1v13.500H16M2.500 14L11 6" stroke="#444" /><path d="M13 0L9 6h3l-1 4 4-6h-2z" fill="#f8b72d" stroke="#c67b13" strokeWidth=".6" /></Svg> },
  { label: "Dynamic Input", on: false, icon: <Svg stroke="#111"><path d="M5.500 3v9M1 7.500h8" strokeWidth="1.400" /><path d="M9.500 9.500h5v3h-5z" fill="#fff" /></Svg> },
  { label: "Lineweight", on: false, icon: <Svg stroke="#111"><path d="M2 8.500h6" /><path d="M8 8.500h6M8.500 3v10" strokeWidth="2" /></Svg> },
  { label: "Transparency", on: true, icon: <Svg stroke="#2d77ae"><path d="M.5.500h15v15H.5z" fill="#9fd3f3" /><path d="M2 3h12M2 7h12M2 11h12M4 5h10M4 9h10M4 13h10" stroke="#e4f5fe" strokeWidth="2" strokeDasharray="2 2" /></Svg> },
  { label: "Quick Properties", on: false, icon: <Svg stroke="#111"><path d="M4.500 3.500h7v9h-7z" fill="#fff" strokeWidth="1.500" /><path d="M6 6h4M6 8h4M6 10h4" strokeDasharray="1 1" /></Svg> },
  { label: "Selection Cycling", on: false, icon: <Svg><path d="M3.500 0v7M0 3.500h7" stroke="#333" /><path d="M5.500 5.500h6v6h-6z" fill="#fff" /><path d="M8.500 8.500h7v7h-7z" fill="#76bd63" stroke="#376a2b" /></Svg> },
  { label: "Annotation Monitor", on: false, icon: <Svg><path d="M5.500.500h5v5h5v5h-5v5h-5v-5h-5v-5h5z" fill="#eef3fa" stroke="#55585d" /></Svg> },
];

const cell = "flex h-full items-center justify-center border-r border-[#777] bg-linear-to-b from-[#b9b9b9] to-[#aaa9a8]";
const person = <path d="M7 1l2 6 5 6-6-3-1 4-1-4-5 3 5-6z" fill="#eee" stroke="#444" />;

function StatusBar() {
  const views = [
    { label: "Quick view layouts", icon: <Svg><path d="M2.500 1.500h11v9h-11z" fill="#f2f2f2" /><path d="M5 4v5h5z" fill="#555" stroke="none" /><path d="M0 13.500h16" strokeWidth="2" /></Svg> },
    { label: "Quick view drawings", icon: <Svg><path d="M.5 2.500h7v6h-7zM8.500 2.500h7v6h-7z" fill="#f2f2f2" /><path d="M0 12h16" strokeWidth="2" /></Svg> },
  ];
  return (
    <footer className="flex h-[23px] items-stretch border-t border-[#222] bg-linear-to-b from-[#a09f9e] to-[#878685] font-['Liberation_Sans',sans-serif] text-[12px] text-black">
      <output className="flex w-[172px] items-center whitespace-pre border-r border-[#666] bg-[#918f8e] pl-3 text-[11px]">184.3110, -19.2521 , 0.0000</output>
      {modes.map((m) => (
        <button key={m.label} aria-label={m.label} aria-pressed={m.on} className={clsx("w-[22px] shrink-0", m.on ? "flex h-full items-center justify-center border-r border-[#777] bg-linear-to-b from-[#d9f1f8] via-[#b0d7e4] to-[#ddf5fa]" : cell)}>{m.icon}</button>
      ))}
      <span className="flex-1" />
      <button className={clsx("w-11 text-[11px]", cell)}>MODEL</button>
      {views.map((v) => <button key={v.label} aria-label={v.label} className={clsx("w-[22px]", cell)}>{v.icon}</button>)}
      <span className="w-3" />
      <button className={clsx("w-[51px] gap-1 text-[11px]", cell)}><Svg>{person}</Svg>1:1<Caret color="#111" /></button>
      <button aria-label="Annotation visibility" className={clsx("w-[22px]", cell)}><Svg>{person}<circle cx="12" cy="9" r="2.500" fill="#fbd44e" stroke="#c77814" /><path d="M12 12v3" stroke="#c77814" /></Svg></button>
      <button aria-label="Add scales" className={clsx("w-[22px]", cell)}><Svg><g opacity=".5">{person}<path d="M8 1l6 7" /></g></Svg></button>
      <span className="w-1.5" />
      <button aria-label="Workspace switching" className={clsx("w-[22px]", cell)}><Gear stroke="#444" /></button>
      <button aria-label="Lock toolbars" className={clsx("w-[22px]", cell)}><Svg><path d="M1.500 6.500h9v8h-9z" fill="#e8e8e8" /><path d="M8.500 6V3.500c0-3 6-3 6 0v4M6 9v3" strokeWidth="1.400" /></Svg></button>
      <button aria-label="Hardware acceleration" className={clsx("w-[22px]", cell)}><Svg stroke="none"><circle cx="8" cy="8" r="6.500" fill="#858585" /><circle cx="8" cy="8" r="5" fill="#6d6d6d" /><path d="M4 4l5 5" stroke="#ddd" strokeWidth="2" /></Svg></button>
      <div className="flex w-14 items-center justify-center gap-1.5 border-r border-[#555] bg-[#858585]">
        <Svg><path d="M1 10l3-3h11l-3 7H1z" fill="#f4cf46" stroke="#92701d" /><path d="M2.500 2.500h9v5h-9z" fill="#54a9dc" stroke="#234f70" /><path d="M8 11l3 4 5-7" stroke="#38a72e" strokeWidth="2" /></Svg>
        <Svg><path d="M6 11C6 9 3.500 8 3.500 5a4.500 4.500 0 0 1 9 0c0 3-2.500 4-2.500 6z" fill="#fdf0a5" stroke="#b99832" /><path d="M7 12h2v3H7z" fill="#ccc" /></Svg>
      </div>
      <button aria-label="Status bar menu" className={clsx("w-3", cell)}><Caret color="#111" small /></button>
      <button aria-label="Clean screen" className={clsx("w-[22px]", cell)}><Svg><path d="M1.500 1.500h13v12h-13z" fill="#f2f5fa" /><path d="M2 2h12v2H2z" fill="#667" stroke="none" /></Svg></button>
      <div className="flex w-4 items-end justify-end"><Svg w={12} h={14} stroke="#ddd"><path d="M10 2v12M6.500 6v8M3 10v4" strokeWidth="2" strokeDasharray="2 2" /></Svg></div>
    </footer>
  );
}

const tasks = [
  { label: "Explorer", look: "open", icon: <Svg w={34} h={32} stroke="none"><path d="M4 3h9l2 3h13v22H4z" fill="#ecc765" /><path d="M2 8h29v21H2z" fill="#f7e4a0" /><path d="M6 3h4v2H6z" fill="#4a9b3d" /><path d="M15 5h4v2h-4z" fill="#3a79c9" /><path d="M22 5h4v2h-4z" fill="#d85132" /><path d="M6 31v-9c0-4 3-4 5-4h12c2 0 5 0 5 4v9h-5v-7H11v7z" fill="#a7dbf4" stroke="#5ea9d3" /></Svg> },
  { label: "Chrome", look: "open", icon: <Svg w={30} h={30} stroke="none"><circle cx="15" cy="15" r="14" fill="#e8e8e8" /><path d="M15 15L3 8a14 14 0 0 1 24.500 1H15z" fill="#dd3a2d" /><path d="M15 15L3 8a14 14 0 0 0 10 21l7-11z" fill="#41a648" /><path d="M27.500 9H15l5 9-7 11A14 14 0 0 0 27.500 9z" fill="#f6d53f" /><circle cx="15" cy="15" r="7" fill="#f5f5f5" /><circle cx="15" cy="15" r="5.300" fill="#377bd1" /></Svg> },
  { label: "Reader", look: "", icon: <Svg w={28} h={26} stroke="none"><path d="M0 0h28v26H0z" fill="#e1dcda" /><path d="M3 5h10l1 1 1-1h10v16H3z" fill="#552522" /><path d="M5 7h8v11H5zM15 7h8v11h-8z" stroke="#e1dcda" /><path d="M6 10h6M6 12h6M6 14h6M16 14h6M16 12h3" stroke="#bca6a3" /><path d="M19 8h3v4h-3z" fill="#e1dcda" /></Svg> },
  { label: "Toolbox", look: "", icon: <Svg w={34} h={30}><path d="M11 5c2-4 10-4 12 0" stroke="#777" strokeWidth="2" /><path d="M2 9l16-5 14 4-1 16-20 5-7-6z" fill="#1780c2" stroke="#0a4e80" /><path d="M5 8l14-3 10 3v5l-17 4-6-3z" fill="#264d57" stroke="none" /><path d="M8 9l7 1-2 4zM14 7l6 6-5 1z" fill="#9fe0ae" stroke="none" /><path d="M20 8h8l-2 4h-5z" fill="#8fa39f" stroke="none" /><path d="M11 17l20-5v12l-20 5z" fill="#2397da" stroke="none" /></Svg> },
  { label: "FileZilla", look: "", icon: <Svg w={32} h={32} stroke="none"><path d="M0 0h32v32H0z" fill="#d30e0e" /><path d="M1 1h30v30H1z" stroke="#8b0808" strokeDasharray="3 2" /><path d="M9 5h14l-1 4h-9l-1 4h7l-1 3h-7l-2 8H4z" fill="#fff" /><path d="M16 14h11l-1 4-7 7h6l-1 3H12l1-3 8-8h-6z" fill="#fff" /></Svg> },
  { label: "Notes", look: "open", icon: <Svg w={34} h={28} stroke="none"><path d="M5 5l14-3 3 17-17 3z" fill="#67b4e4" /><path d="M7 3l13 4-4 17-14-5z" fill="#8ecb62" opacity=".8" /><path d="M13 8l15-4 5 17-15 5z" fill="#fae565" stroke="#c8ab31" /></Svg> },
  { label: "Acrobat", look: "open", icon: <Svg w={30} h={28} stroke="#fff"><path d="M.5.500h29v27H.5z" fill="#d41515" stroke="#8c0808" /><path d="M14 4c-1 6 3 12 11 14 1-3-8-3-14 0-6 3-7 6-5 6 4-1 9-12 10-18 0-2-2-3-2-2z" strokeWidth="1.300" /></Svg> },
  {
    label: "AutoCAD", look: "current", icon: (
      <Svg w={32} h={32} stroke="none">
        <defs><linearGradient id="cad" x1="1" y1="0" x2="0" y2="1"><stop offset="0" stopColor="#fbdada" /><stop offset=".6" stopColor="#ee4646" /><stop offset="1" stopColor="#f77" /></linearGradient></defs>
        <path d="M0 0h32v32H0z" fill="url(#cad)" /><path d="M16 3L6 23l5-2h10l5 2z" fill="#8f1309" /><path d="M16 3l-3 13 3 4 4-5z" fill="#d0402c" /><path d="M8 21l3-1h10l3 1 1 3H7z" fill="#47100b" /><path d="M12 21h8v2h-8z" fill="#ee6b6b" />
      </Svg>
    ),
  },
  { label: "Paint", look: "open", icon: <Svg w={32} h={32} stroke="none"><path d="M2 19C1 8 12 4 20 7c10 3 10 14 2 20-8 4-5-6-10-5-3 0-2 6-6 4-3-1-4-4-4-7z" fill="#d4e8f7" stroke="#78a8cc" /><circle cx="7" cy="17" r="2.500" fill="#d8423a" /><circle cx="11" cy="12" r="2.500" fill="#4fae49" /><circle cx="18" cy="10" r="2.500" fill="#edc33b" /><circle cx="15" cy="19" r="2.500" fill="#2c3f66" /><path d="M27 5L17 30l3-1 10-23z" fill="#d9963c" /><path d="M25 5c0-4 6-6 6-4s-1 6-3 6z" fill="#b98149" /></Svg> },
];

function Taskbar() {
  return (
    <div className="flex h-[39px] items-stretch border-t border-[#8f6c68] bg-[linear-gradient(90deg,#300b0e_0%,#300b0e_44%,#6b3a2a_46%,#70402f_54%,#3a1712_57%,#44201a_59%,#8c4532_60%,#80402e_62%,#3f1a19_63%,#4d2422_67%,#38100f_71%,#38100f_90%,#451a14_100%)] text-white">
      <button aria-label="Start" className="flex w-[60px] items-center pl-2">
        <Svg w={38} h={38} stroke="none">
          <defs><radialGradient id="orb" cx=".5" cy=".8" r=".8"><stop offset="0" stopColor="#5dd5f5" /><stop offset=".5" stopColor="#1e67a5" /><stop offset="1" stopColor="#8db3cd" /></radialGradient></defs>
          <circle cx="19" cy="19" r="18" fill="url(#orb)" stroke="#1a3a58" />
          <path d="M12 11c3-2 5-2 7 0l-2 8c-2-2-5-2-7 0z" fill="#ee6b2a" /><path d="M20 11c3 1 5 1 8-1l-2 8c-3 2-5 2-8 1z" fill="#8ecb3f" />
          <path d="M10 20c3-2 5-2 7 0l-2 7c-2-2-5-2-7 0z" fill="#4ca7e6" /><path d="M18 21c3 1 5 1 8-1l-2 8c-3 2-5 2-8 1z" fill="#fbc932" />
        </Svg>
      </button>
      <div className="flex flex-1 gap-1">
        {tasks.map((t) => (
          <button
            key={t.label}
            aria-label={t.label}
            className={clsx(
              "flex w-[58px] shrink-0 items-center justify-center",
              t.look === "open" && "rounded-sm border border-[#a38a88] bg-linear-to-br from-[#98807f] via-[#5c3b3a] to-[#674342]",
              t.look === "current" && "rounded-sm border border-[#e5dbda] bg-linear-to-br from-[#dcd2d1] via-[#b09b9a] to-[#8e6e6c]",
            )}
          >
            {t.icon}
          </button>
        ))}
      </div>
      <div className="flex items-center text-[11px]">
        <button className="mr-4 pb-1.5">PT</button>
        <button aria-label="Show hidden icons" className="mr-[13px]"><Svg w={8} h={4} stroke="none"><path d="M0 4h8L4 0z" fill="#fff" /></Svg></button>
        <div className="flex gap-2">
          <button aria-label="Action Center"><Svg><path d="M2.500 1v14" stroke="#fff" /><path d="M3 2h6l3 1v6H3z" fill="#fff" stroke="none" /><circle cx="11" cy="11" r="4" fill="#d92b20" stroke="none" /><path d="M9.500 9.500l3 3M12.500 9.500l-3 3" stroke="#fff" /></Svg></button>
          <button aria-label="Network"><Svg stroke="#fff"><path d="M2 14v-2M5 14v-4M8 14V8M11 14V6M14 14V3" strokeWidth="2" /></Svg></button>
          <button aria-label="Dropbox"><Svg stroke="none"><path d="M4 1l4 3 4-3 4 3-4 3 3 2-7 5-7-5 3-2-4-3z" fill="#5cb7ee" /><path d="M8 4l4 3-4 2-4-2z" fill="#fff" /><circle cx="11.500" cy="11.500" r="4" fill="#37a64a" /><path d="M9.500 11.500l2 2 3-4" stroke="#fff" /></Svg></button>
          <button aria-label="Volume"><Svg stroke="#fff"><path d="M2 6h3l4-4v12l-4-4H2z" fill="#fff" /><path d="M11.500 5c2 2 2 4 0 6" /></Svg></button>
          <button aria-label="Power"><Svg stroke="#fff"><path d="M8 3.500H2.500v11h8V12" strokeWidth="1.500" /><path d="M5 6v6M5 1.500h3" strokeWidth="2" /><path d="M7.500 6.500h7v2l-2 2h-3l-2-2z" fill="#fff" /><path d="M9.500 3v3M12.500 3v3M11 11v4" /></Svg></button>
        </div>
        <time className="mx-[15px] flex flex-col items-center leading-[17px]"><span>21:13</span><span>01-11-2014</span></time>
      </div>
      <button aria-label="Show desktop" className="w-3.5 border border-[#8d6d6b] bg-linear-to-b from-[#7d605e] to-[#44201f]" />
    </div>
  );
}

export default function App() {
  return (
    <div className="flex min-h-screen flex-col overflow-hidden bg-[#6d6d6d] font-['Open_Sans',sans-serif]">
      <Header />
      <Ribbon />
      <FileTabs />
      <div className="h-1 bg-[#666664]" />
      <Canvas />
      <LayoutTabs />
      <CommandLine />
      <StatusBar />
      <Taskbar />
    </div>
  );
}
